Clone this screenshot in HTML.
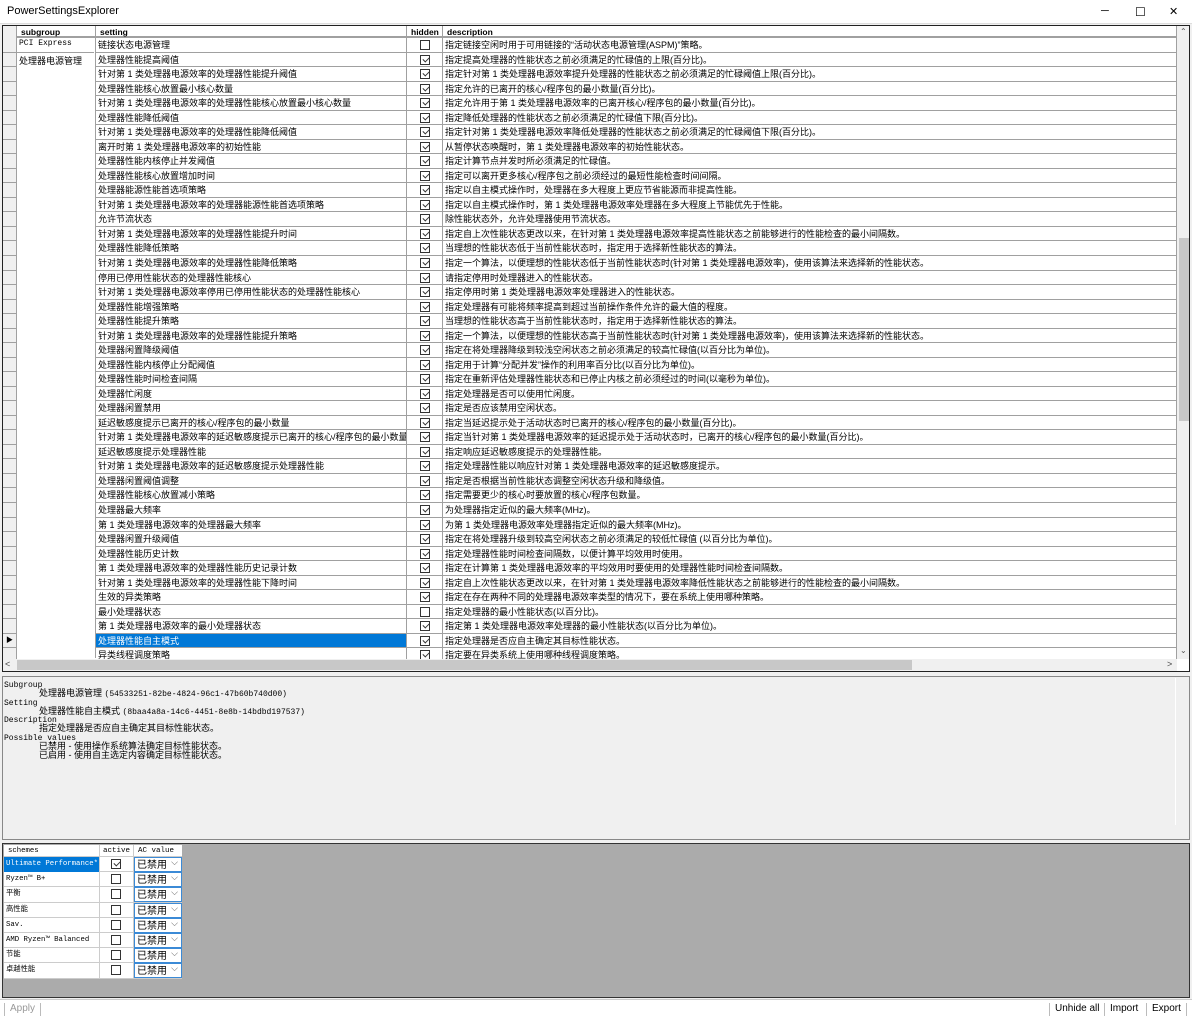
<!DOCTYPE html>
<html><head><meta charset="utf-8"><style>
*{margin:0;padding:0;box-sizing:border-box}
body{width:1192px;height:1019px;background:#f0f0f0;position:relative;overflow:hidden;font-family:"Liberation Sans","Noto Sans CJK SC",sans-serif;font-size:9px;color:#000}
.title{position:absolute;left:0;top:0;width:1192px;height:24px;background:#fff;border-bottom:1px solid #ddd}
.title span{position:absolute;left:7px;top:5px;font-size:11px;color:#000}
.wb{position:absolute;top:3px;font-size:13px;color:#222}
.grid{position:absolute;left:2px;top:25px;width:1188px;height:647px;background:#fff;border:1px solid #222;overflow:hidden}
.hd{position:absolute;left:0;top:0;width:1174px;height:12px;background:#fff;border-bottom:2px solid #a0a0a0}
.hd div{position:absolute;top:0;height:12px;font-weight:bold;font-size:8.5px;line-height:12px;padding-left:4px;border-right:1px solid #a0a0a0}
.rows{position:absolute;left:0;top:12px;width:1174px}
.r{height:14.54px;position:relative}
.r>*{position:absolute;top:0;height:14.54px;line-height:14px;border-right:1px solid #a0a0a0;border-bottom:1px solid #a0a0a0;white-space:nowrap;overflow:hidden;font-style:normal;font-weight:normal;text-decoration:none}
.r i{left:0;width:14px;background:#f0f0f0}
.r b{left:93px;width:311px;padding-left:2px}
.r u{left:404px;width:36px}
.r em{left:440px;width:734px;padding-left:2px}
.sel b{background:#0078d7;color:#fff}
.c{position:absolute;left:13px;top:2px;width:10px;height:10px;border:1px solid #333;background:#fff}
.c.k::after{content:"";position:absolute;left:2px;top:1px;width:5px;height:3px;border-left:1px solid #333;border-bottom:1px solid #333;transform:rotate(-45deg)}
.sg{position:absolute;left:14px;top:12px;width:79px;height:620px;border-right:1px solid #a0a0a0;background:#fff}
.sg div{position:absolute;left:2px;white-space:nowrap}
.vs{position:absolute;left:1174px;top:0;width:14px;height:633px;background:#f0f0f0}
.hs{position:absolute;left:0;top:633px;width:1174px;height:12px;background:#f0f0f0}
.det{position:absolute;left:2px;top:676px;width:1188px;height:164px;background:#f0f0f0;border:1px solid #888;font-family:"Liberation Mono","Noto Sans CJK SC",monospace;font-size:8px;line-height:9px}
.det .l{position:absolute;left:1px;height:9px;line-height:9px}
.det .v{position:absolute;left:36px;font-family:"Liberation Sans","Noto Sans CJK SC",sans-serif;font-size:9px;height:9px;line-height:9px;white-space:nowrap}
.bot{position:absolute;left:2px;top:843px;width:1188px;height:155px;background:#ababab;border:1px solid #333}
.sc{position:absolute;left:1px;top:1px;width:178px;background:#fff}
.sr{height:15.2px;position:relative;border-bottom:1px solid #ccc}
.sr>div{position:absolute;top:0;height:15px;line-height:15px;white-space:nowrap;overflow:hidden}
.sr .a{left:0;width:96px;padding-left:2px;font-size:7.3px;border-right:1px solid #ccc;font-family:"Liberation Mono","Noto Sans CJK SC",monospace}
.sr .b{left:96px;width:34px;border-right:1px solid #ccc}
.sr .d{left:130px;width:48px;border:1px solid #3b8ad6;padding-left:2px;font-size:10px}
.sr .d::after{content:"⌵";position:absolute;right:3px;top:-3px;font-size:9px;color:#555}
.sr .c{left:11px;top:2px}
.st{position:absolute;left:0;top:999px;width:1192px;height:20px;background:#fff;border-top:1px solid #ccc;font-size:10px}
.st span{position:absolute;top:3px}
.sep{position:absolute;top:3px;width:1px;height:13px;background:#bbb}
</style></head><body>
<div class="title"><span>PowerSettingsExplorer</span>
<span class="wb" style="left:1101px">─</span><span class="wb" style="left:1135px;font-size:12px">☐</span><span class="wb" style="left:1169px">✕</span></div>
<div class="grid">
<div class="hd"><div style="left:0;width:14px;background:#f0f0f0"></div><div style="left:14px;width:79px">subgroup</div><div style="left:93px;width:311px">setting</div><div style="left:404px;width:36px">hidden</div><div style="left:440px;width:734px">description</div></div>
<div class="rows">
<div class="r"><i></i><b>链接状态电源管理</b><u><s class="c"></s></u><em>指定链接空闲时用于可用链接的“活动状态电源管理(ASPM)”策略。</em></div>
<div class="r"><i></i><b>处理器性能提高阈值</b><u><s class="c k"></s></u><em>指定提高处理器的性能状态之前必须满足的忙碌值的上限(百分比)。</em></div>
<div class="r"><i></i><b>针对第 1 类处理器电源效率的处理器性能提升阈值</b><u><s class="c k"></s></u><em>指定针对第 1 类处理器电源效率提升处理器的性能状态之前必须满足的忙碌阈值上限(百分比)。</em></div>
<div class="r"><i></i><b>处理器性能核心放置最小核心数量</b><u><s class="c k"></s></u><em>指定允许的已离开的核心/程序包的最小数量(百分比)。</em></div>
<div class="r"><i></i><b>针对第 1 类处理器电源效率的处理器性能核心放置最小核心数量</b><u><s class="c k"></s></u><em>指定允许用于第 1 类处理器电源效率的已离开核心/程序包的最小数量(百分比)。</em></div>
<div class="r"><i></i><b>处理器性能降低阈值</b><u><s class="c k"></s></u><em>指定降低处理器的性能状态之前必须满足的忙碌值下限(百分比)。</em></div>
<div class="r"><i></i><b>针对第 1 类处理器电源效率的处理器性能降低阈值</b><u><s class="c k"></s></u><em>指定针对第 1 类处理器电源效率降低处理器的性能状态之前必须满足的忙碌阈值下限(百分比)。</em></div>
<div class="r"><i></i><b>离开时第 1 类处理器电源效率的初始性能</b><u><s class="c k"></s></u><em>从暂停状态唤醒时，第 1 类处理器电源效率的初始性能状态。</em></div>
<div class="r"><i></i><b>处理器性能内核停止并发阈值</b><u><s class="c k"></s></u><em>指定计算节点并发时所必须满足的忙碌值。</em></div>
<div class="r"><i></i><b>处理器性能核心放置增加时间</b><u><s class="c k"></s></u><em>指定可以离开更多核心/程序包之前必须经过的最短性能检查时间间隔。</em></div>
<div class="r"><i></i><b>处理器能源性能首选项策略</b><u><s class="c k"></s></u><em>指定以自主模式操作时，处理器在多大程度上更应节省能源而非提高性能。</em></div>
<div class="r"><i></i><b>针对第 1 类处理器电源效率的处理器能源性能首选项策略</b><u><s class="c k"></s></u><em>指定以自主模式操作时，第 1 类处理器电源效率处理器在多大程度上节能优先于性能。</em></div>
<div class="r"><i></i><b>允许节流状态</b><u><s class="c k"></s></u><em>除性能状态外，允许处理器使用节流状态。</em></div>
<div class="r"><i></i><b>针对第 1 类处理器电源效率的处理器性能提升时间</b><u><s class="c k"></s></u><em>指定自上次性能状态更改以来，在针对第 1 类处理器电源效率提高性能状态之前能够进行的性能检查的最小间隔数。</em></div>
<div class="r"><i></i><b>处理器性能降低策略</b><u><s class="c k"></s></u><em>当理想的性能状态低于当前性能状态时，指定用于选择新性能状态的算法。</em></div>
<div class="r"><i></i><b>针对第 1 类处理器电源效率的处理器性能降低策略</b><u><s class="c k"></s></u><em>指定一个算法，以便理想的性能状态低于当前性能状态时(针对第 1 类处理器电源效率)，使用该算法来选择新的性能状态。</em></div>
<div class="r"><i></i><b>停用已停用性能状态的处理器性能核心</b><u><s class="c k"></s></u><em>请指定停用时处理器进入的性能状态。</em></div>
<div class="r"><i></i><b>针对第 1 类处理器电源效率停用已停用性能状态的处理器性能核心</b><u><s class="c k"></s></u><em>指定停用时第 1 类处理器电源效率处理器进入的性能状态。</em></div>
<div class="r"><i></i><b>处理器性能增强策略</b><u><s class="c k"></s></u><em>指定处理器有可能将频率提高到超过当前操作条件允许的最大值的程度。</em></div>
<div class="r"><i></i><b>处理器性能提升策略</b><u><s class="c k"></s></u><em>当理想的性能状态高于当前性能状态时，指定用于选择新性能状态的算法。</em></div>
<div class="r"><i></i><b>针对第 1 类处理器电源效率的处理器性能提升策略</b><u><s class="c k"></s></u><em>指定一个算法，以便理想的性能状态高于当前性能状态时(针对第 1 类处理器电源效率)，使用该算法来选择新的性能状态。</em></div>
<div class="r"><i></i><b>处理器闲置降级阈值</b><u><s class="c k"></s></u><em>指定在将处理器降级到较浅空闲状态之前必须满足的较高忙碌值(以百分比为单位)。</em></div>
<div class="r"><i></i><b>处理器性能内核停止分配阈值</b><u><s class="c k"></s></u><em>指定用于计算“分配并发”操作的利用率百分比(以百分比为单位)。</em></div>
<div class="r"><i></i><b>处理器性能时间检查间隔</b><u><s class="c k"></s></u><em>指定在重新评估处理器性能状态和已停止内核之前必须经过的时间(以毫秒为单位)。</em></div>
<div class="r"><i></i><b>处理器忙闲度</b><u><s class="c k"></s></u><em>指定处理器是否可以使用忙闲度。</em></div>
<div class="r"><i></i><b>处理器闲置禁用</b><u><s class="c k"></s></u><em>指定是否应该禁用空闲状态。</em></div>
<div class="r"><i></i><b>延迟敏感度提示已离开的核心/程序包的最小数量</b><u><s class="c k"></s></u><em>指定当延迟提示处于活动状态时已离开的核心/程序包的最小数量(百分比)。</em></div>
<div class="r"><i></i><b>针对第 1 类处理器电源效率的延迟敏感度提示已离开的核心/程序包的最小数量</b><u><s class="c k"></s></u><em>指定当针对第 1 类处理器电源效率的延迟提示处于活动状态时，已离开的核心/程序包的最小数量(百分比)。</em></div>
<div class="r"><i></i><b>延迟敏感度提示处理器性能</b><u><s class="c k"></s></u><em>指定响应延迟敏感度提示的处理器性能。</em></div>
<div class="r"><i></i><b>针对第 1 类处理器电源效率的延迟敏感度提示处理器性能</b><u><s class="c k"></s></u><em>指定处理器性能以响应针对第 1 类处理器电源效率的延迟敏感度提示。</em></div>
<div class="r"><i></i><b>处理器闲置阈值调整</b><u><s class="c k"></s></u><em>指定是否根据当前性能状态调整空闲状态升级和降级值。</em></div>
<div class="r"><i></i><b>处理器性能核心放置减小策略</b><u><s class="c k"></s></u><em>指定需要更少的核心时要放置的核心/程序包数量。</em></div>
<div class="r"><i></i><b>处理器最大频率</b><u><s class="c k"></s></u><em>为处理器指定近似的最大频率(MHz)。</em></div>
<div class="r"><i></i><b>第 1 类处理器电源效率的处理器最大频率</b><u><s class="c k"></s></u><em>为第 1 类处理器电源效率处理器指定近似的最大频率(MHz)。</em></div>
<div class="r"><i></i><b>处理器闲置升级阈值</b><u><s class="c k"></s></u><em>指定在将处理器升级到较高空闲状态之前必须满足的较低忙碌值 (以百分比为单位)。</em></div>
<div class="r"><i></i><b>处理器性能历史计数</b><u><s class="c k"></s></u><em>指定处理器性能时间检查间隔数，以便计算平均效用时使用。</em></div>
<div class="r"><i></i><b>第 1 类处理器电源效率的处理器性能历史记录计数</b><u><s class="c k"></s></u><em>指定在计算第 1 类处理器电源效率的平均效用时要使用的处理器性能时间检查间隔数。</em></div>
<div class="r"><i></i><b>针对第 1 类处理器电源效率的处理器性能下降时间</b><u><s class="c k"></s></u><em>指定自上次性能状态更改以来，在针对第 1 类处理器电源效率降低性能状态之前能够进行的性能检查的最小间隔数。</em></div>
<div class="r"><i></i><b>生效的异类策略</b><u><s class="c k"></s></u><em>指定在存在两种不同的处理器电源效率类型的情况下，要在系统上使用哪种策略。</em></div>
<div class="r"><i></i><b>最小处理器状态</b><u><s class="c"></s></u><em>指定处理器的最小性能状态(以百分比)。</em></div>
<div class="r"><i></i><b>第 1 类处理器电源效率的最小处理器状态</b><u><s class="c k"></s></u><em>指定第 1 类处理器电源效率处理器的最小性能状态(以百分比为单位)。</em></div>
<div class="r sel"><i style="font-size:7px;padding-left:3px">▶</i><b>处理器性能自主模式</b><u><s class="c k"></s></u><em>指定处理器是否应自主确定其目标性能状态。</em></div>
<div class="r"><i></i><b>异类线程调度策略</b><u><s class="c k"></s></u><em>指定要在异类系统上使用哪种线程调度策略。</em></div>
</div>
<div class="sg"><div style="top:1px;font-family:'Liberation Mono',monospace;font-size:8px">PCI Express</div><div style="top:0;left:-2px;width:79px;height:14.5px;border-bottom:1px solid #a0a0a0"></div><div style="top:16px">处理器电源管理</div></div>
<div class="vs"><div style="position:absolute;left:3px;top:1px;font-size:8px;color:#555">⌃</div><div style="position:absolute;left:2px;top:212px;width:10px;height:183px;background:#c8c8c8"></div><div style="position:absolute;left:3px;top:620px;font-size:8px;color:#555">⌄</div></div>
<div class="hs"><div style="position:absolute;left:2px;top:0;font-size:9px;color:#444">&lt;</div><div style="position:absolute;left:14px;top:1px;width:895px;height:10px;background:#c8c8c8"></div><div style="position:absolute;left:1164px;top:0;font-size:9px;color:#444">&gt;</div></div>
</div>
<div class="det">
<div class="l" style="top:4px">Subgroup</div>
<div class="v" style="top:12px">处理器电源管理 <span style="font-family:'Liberation Mono',monospace;font-size:8px">(54533251-82be-4824-96c1-47b60b740d00)</span></div>
<div class="l" style="top:22px">Setting</div>
<div class="v" style="top:30px">处理器性能自主模式 <span style="font-family:'Liberation Mono',monospace;font-size:8px">(8baa4a8a-14c6-4451-8e8b-14bdbd197537)</span></div>
<div class="l" style="top:39px">Description</div>
<div class="v" style="top:47px">指定处理器是否应自主确定其目标性能状态。</div>
<div class="l" style="top:57px">Possible values</div>
<div class="v" style="top:65px">已禁用 - 使用操作系统算法确定目标性能状态。</div>
<div class="v" style="top:74px">已启用 - 使用自主选定内容确定目标性能状态。</div>
<div style="position:absolute;left:1172px;top:1px;width:14px;height:147px;background:#f0f0f0;border-left:1px solid #fff"></div>
</div>
<div class="bot"><div class="sc">
<div class="sr" style="height:12px"><div class="a" style="height:12px;line-height:12px;padding-left:4px">schemes</div><div class="b" style="height:12px;line-height:12px;font-family:'Liberation Mono',monospace;font-size:7.5px;padding-left:3px">active</div><div style="left:130px;height:12px;line-height:12px;font-family:'Liberation Mono',monospace;font-size:7.5px;padding-left:4px">AC value</div></div>
<div class="sr"><div class="a" style="background:#0078d7;color:#fff">Ultimate Performance*</div><div class="b"><s class="c k"></s></div><div class="d">已禁用</div></div>
<div class="sr"><div class="a">Ryzen™ B+</div><div class="b"><s class="c"></s></div><div class="d">已禁用</div></div>
<div class="sr"><div class="a">平衡</div><div class="b"><s class="c"></s></div><div class="d">已禁用</div></div>
<div class="sr"><div class="a">高性能</div><div class="b"><s class="c"></s></div><div class="d">已禁用</div></div>
<div class="sr"><div class="a">Sav.</div><div class="b"><s class="c"></s></div><div class="d">已禁用</div></div>
<div class="sr"><div class="a">AMD Ryzen™ Balanced</div><div class="b"><s class="c"></s></div><div class="d">已禁用</div></div>
<div class="sr"><div class="a">节能</div><div class="b"><s class="c"></s></div><div class="d">已禁用</div></div>
<div class="sr"><div class="a">卓越性能</div><div class="b"><s class="c"></s></div><div class="d">已禁用</div></div>
</div></div>
<div class="st"><div class="sep" style="left:4px"></div><span style="left:10px;color:#999">Apply</span><div class="sep" style="left:40px"></div>
<div class="sep" style="left:1049px"></div><span style="left:1055px">Unhide all</span><div class="sep" style="left:1104px"></div><span style="left:1110px">Import</span><div class="sep" style="left:1146px"></div><span style="left:1152px">Export</span><div class="sep" style="left:1186px"></div></div>
</body></html>
